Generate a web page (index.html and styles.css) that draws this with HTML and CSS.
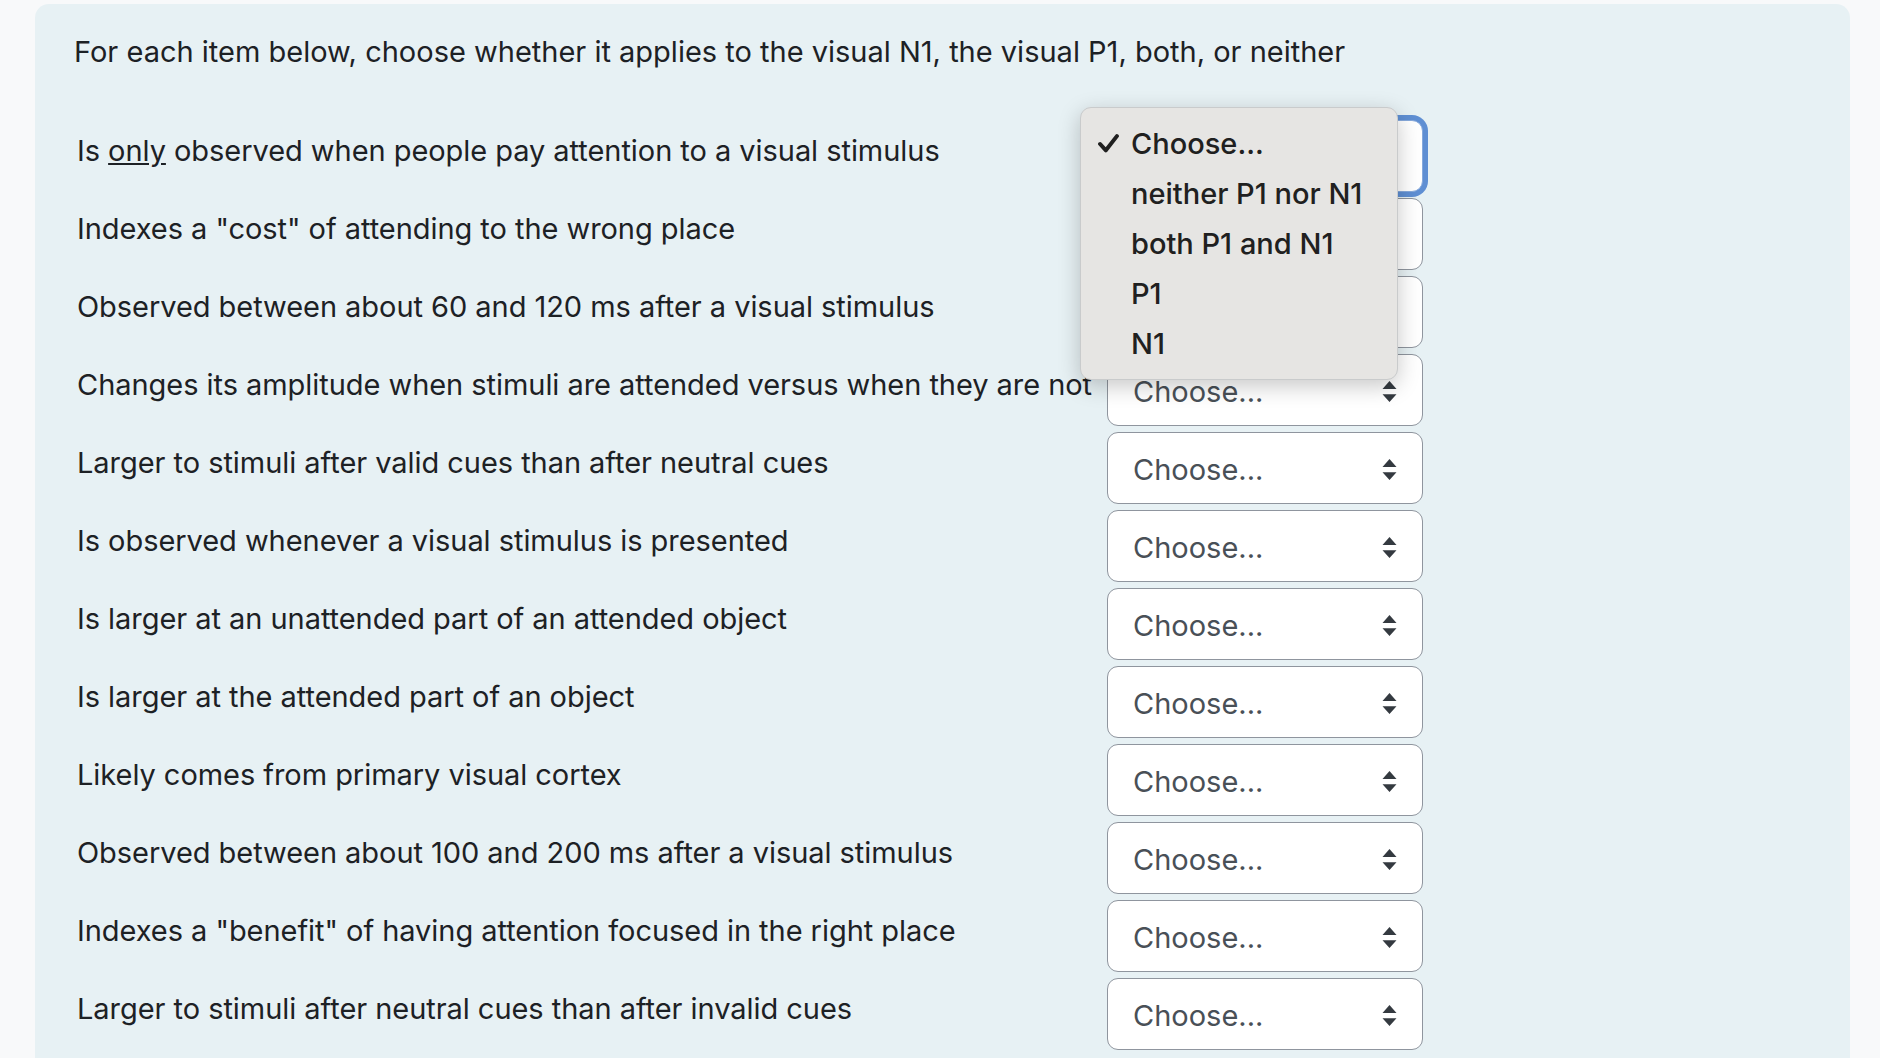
FILE: index.html
```html
<!DOCTYPE html>
<html lang="en">
<head>
    <meta charset="UTF-8">
    <meta name="viewport" content="width=device-width, initial-scale=1.0">
    <title>Matching question</title>
    <link rel="stylesheet" href="styles.css">
</head>
<body>
    <!-- Question panel -->
    <div class="formulation">
        <p class="qtext">For each item below, choose whether it applies to the visual N1, the visual P1, both, or neither</p>

        <div class="answer">
            <div class="row">
                <div class="text">Is <u>only</u> observed when people pay attention to a visual stimulus</div>
                <div class="control">
                    <div class="select focused">
                        <span>Choose...</span>
                        <svg class="arrows" viewBox="0 0 8 12"><path d="M4 0L0 4.5h8zM4 12L0 7.5h8z"/></svg>
                    </div>
                    <!-- open menu -->
                    <ul class="menu">
                        <li class="checked"><svg class="check" viewBox="0 0 20 18"><path d="M2 9.5l5.5 6L18 2" /></svg>Choose...</li>
                        <li>neither P1 nor N1</li>
                        <li>both P1 and N1</li>
                        <li>P1</li>
                        <li>N1</li>
                    </ul>
                </div>
            </div>
            <div class="row">
                <div class="text">Indexes a "cost" of attending to the wrong place</div>
                <div class="control"><div class="select"><span>Choose...</span><svg class="arrows" viewBox="0 0 8 12"><path d="M4 0L0 4.5h8zM4 12L0 7.5h8z"/></svg></div></div>
            </div>
            <div class="row">
                <div class="text">Observed between about 60 and 120 ms after a visual stimulus</div>
                <div class="control"><div class="select"><span>Choose...</span><svg class="arrows" viewBox="0 0 8 12"><path d="M4 0L0 4.5h8zM4 12L0 7.5h8z"/></svg></div></div>
            </div>
            <div class="row">
                <div class="text">Changes its amplitude when stimuli are attended versus when they are not</div>
                <div class="control"><div class="select"><span>Choose...</span><svg class="arrows" viewBox="0 0 8 12"><path d="M4 0L0 4.5h8zM4 12L0 7.5h8z"/></svg></div></div>
            </div>
            <div class="row">
                <div class="text">Larger to stimuli after valid cues than after neutral cues</div>
                <div class="control"><div class="select"><span>Choose...</span><svg class="arrows" viewBox="0 0 8 12"><path d="M4 0L0 4.5h8zM4 12L0 7.5h8z"/></svg></div></div>
            </div>
            <div class="row">
                <div class="text">Is observed whenever a visual stimulus is presented</div>
                <div class="control"><div class="select"><span>Choose...</span><svg class="arrows" viewBox="0 0 8 12"><path d="M4 0L0 4.5h8zM4 12L0 7.5h8z"/></svg></div></div>
            </div>
            <div class="row">
                <div class="text">Is larger at an unattended part of an attended object</div>
                <div class="control"><div class="select"><span>Choose...</span><svg class="arrows" viewBox="0 0 8 12"><path d="M4 0L0 4.5h8zM4 12L0 7.5h8z"/></svg></div></div>
            </div>
            <div class="row">
                <div class="text">Is larger at the attended part of an object</div>
                <div class="control"><div class="select"><span>Choose...</span><svg class="arrows" viewBox="0 0 8 12"><path d="M4 0L0 4.5h8zM4 12L0 7.5h8z"/></svg></div></div>
            </div>
            <div class="row">
                <div class="text">Likely comes from primary visual cortex</div>
                <div class="control"><div class="select"><span>Choose...</span><svg class="arrows" viewBox="0 0 8 12"><path d="M4 0L0 4.5h8zM4 12L0 7.5h8z"/></svg></div></div>
            </div>
            <div class="row">
                <div class="text">Observed between about 100 and 200 ms after a visual stimulus</div>
                <div class="control"><div class="select"><span>Choose...</span><svg class="arrows" viewBox="0 0 8 12"><path d="M4 0L0 4.5h8zM4 12L0 7.5h8z"/></svg></div></div>
            </div>
            <div class="row">
                <div class="text">Indexes a "benefit" of having attention focused in the right place</div>
                <div class="control"><div class="select"><span>Choose...</span><svg class="arrows" viewBox="0 0 8 12"><path d="M4 0L0 4.5h8zM4 12L0 7.5h8z"/></svg></div></div>
            </div>
            <div class="row">
                <div class="text">Larger to stimuli after neutral cues than after invalid cues</div>
                <div class="control"><div class="select"><span>Choose...</span><svg class="arrows" viewBox="0 0 8 12"><path d="M4 0L0 4.5h8zM4 12L0 7.5h8z"/></svg></div></div>
            </div>
        </div>
    </div>
</body>
</html>
```

FILE: styles.css
```css
html, body {
    margin: 0;
    padding: 0;
    height: 100%;
    overflow: hidden;
}

body {
    font-family: Inter, "Noto Sans", sans-serif;
    background-color: #f8f9fa;
    color: #1d2125;
    padding: 4px 30px 0 35px;
    box-sizing: border-box;
}

/* Question panel */
.formulation {
    background-color: #e7f1f4;
    border-radius: 14px 14px 0 0;
    padding: 28px 0 20px 39px;
    min-height: 1100px;
}

.qtext {
    margin: 0 0 48px 0;
    font-size: 29px;
    line-height: 40px;
}

/* Rows of items */
.row {
    display: grid;
    grid-template-columns: 1033px 316px;
    height: 78px;
}

.text {
    font-size: 29px;
    letter-spacing: -0.05px;
    line-height: 40px;
    padding: 11px 0 0 3px;
    white-space: nowrap;
}

.control {
    position: relative;
}

.select {
    height: 72px;
    box-sizing: border-box;
    border: 1.5px solid #8f959e;
    border-radius: 11px;
    background-color: #fff;
    display: flex;
    align-items: center;
    justify-content: space-between;
    padding: 2px 25px 0 25px;
    color: #495057;
    font-size: 29px;
}

.select .arrows {
    width: 15px;
    height: 21px;
    fill: #343a40;
}

.select.focused {
    border-color: #86a9dc;
    box-shadow: 0 0 0 5px #5f8fd3;
}

/* Open dropdown */
.menu {
    position: absolute;
    left: -27px;
    top: -13px;
    width: 318px;
    box-sizing: border-box;
    margin: 0;
    padding: 11px 0 10px 0;
    list-style: none;
    background-color: #e6e5e3;
    border: 1px solid #c9cbcc;
    border-radius: 11px;
    box-shadow: 0 6px 22px rgba(0, 0, 0, 0.22);
    z-index: 10;
}

.menu li {
    font-size: 29px;
    font-weight: 500;
    color: #202020;
    height: 50px;
    line-height: 50px;
    padding-left: 50px;
    position: relative;
}

.menu .check {
    position: absolute;
    left: 17px;
    top: 15px;
    width: 21px;
    height: 19px;
    fill: none;
    stroke: #202020;
    stroke-width: 3.8;
    stroke-linecap: round;
    stroke-linejoin: round;
}
```
